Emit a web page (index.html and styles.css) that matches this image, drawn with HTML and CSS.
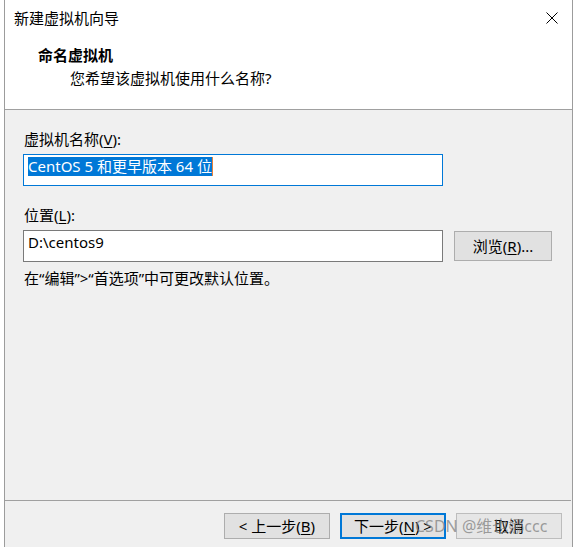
FILE: index.html
```html
<!DOCTYPE html>
<html lang="zh-CN">
<head>
<meta charset="utf-8">
<title>新建虚拟机向导</title>
<link rel="stylesheet" href="styles.css">
</head>
<body>
<div class="window">
  <div class="header">
    <div class="titlebar">
      <span class="title">新建虚拟机向导</span>
      <svg class="close" width="12" height="12" viewBox="0 0 12 12"><path d="M0.5 0.5 L11.5 11.5 M11.5 0.5 L0.5 11.5" stroke="#000" stroke-width="1" fill="none"/></svg>
    </div>
    <div class="heading">命名虚拟机</div>
    <div class="subtitle">您希望该虚拟机使用什么名称?</div>
  </div>
  <div class="body">
    <div class="label">虚拟机名称(<u>V</u>):</div>
    <div class="field field-focus"><span class="sel">CentOS 5 和更早版本 64 位</span><span class="caret"></span></div>
    <div class="label label2">位置(<u>L</u>):</div>
    <div class="row">
      <div class="field">D:\centos9</div>
      <div class="btn browse">浏览(<u>R</u>)...</div>
    </div>
    <div class="hint">在“编辑”&gt;“首选项”中可更改默认位置。</div>
  </div>
  <div class="footer">
    <div class="btn">&lt; 上一步(<u>B</u>)</div>
    <div class="btn btn-default">下一步(<u>N</u>) &gt;</div>
    <div class="btn btn-cancel">取消</div>
    <div class="watermark">CSDN @维也娜ccc</div>
  </div>
</div>
</body>
</html>
```
FILE: styles.css
```css
html, body {
  margin: 0;
  padding: 0;
  background: #ffffff;
}
body {
  font-family: "Noto Sans", "Noto Sans CJK SC", sans-serif;
  font-size: 15px;
  color: #000;
}
u {
  text-decoration: underline;
  text-underline-offset: 2px;
}
.window {
  margin-left: 4px;
  width: 569px;
  height: 547px;
  box-sizing: border-box;
  border-left: 1px solid #9c9c9c;
  border-right: 1px solid #9c9c9c;
  display: flex;
  flex-direction: column;
  background: #f0f0f0;
}
.header {
  height: 109px;
  background: #ffffff;
  border-bottom: 1px solid #a0a0a0;
  flex: none;
}
.titlebar {
  height: 36px;
  display: flex;
  align-items: center;
  justify-content: space-between;
  padding: 0 14px 0 9px;
}
.title {
  line-height: 36px;
}
.close {
  display: block;
}
.heading {
  font-weight: bold;
  line-height: 22px;
  margin-top: 8px;
  padding-left: 33px;
}
.subtitle {
  line-height: 22px;
  margin-top: 1px;
  padding-left: 65px;
}
.body {
  flex: 1;
  padding: 19px 0 0 18px;
}
.label {
  line-height: 20px;
  padding-left: 1px;
  margin-bottom: 5px;
}
.label2 {
  margin-top: 19px;
}
.field {
  width: 420px;
  height: 32px;
  box-sizing: border-box;
  border: 1px solid #7a7a7a;
  background: #fff;
  padding: 2px 0 0 4px;
  line-height: 19px;
  white-space: nowrap;
}
.field-focus {
  border-color: #0078d7;
}
.sel {
  background: #0078d7;
  color: #fff;
  display: inline-block;
  line-height: 19px;
}
.caret {
  display: inline-block;
  width: 1px;
  height: 19px;
  background: #e8823a;
  vertical-align: top;
}
.row {
  display: flex;
  align-items: center;
  gap: 11px;
}
.btn {
  box-sizing: border-box;
  width: 106px;
  height: 26px;
  border: 1px solid #adadad;
  background: #e1e1e1;
  display: flex;
  align-items: center;
  justify-content: center;
  line-height: 20px;
}
.browse {
  width: 98px;
  height: 30px;
}
.hint {
  margin-top: 6px;
  line-height: 20px;
  padding-left: 1px;
}
.footer {
  flex: none;
  height: 47px;
  box-sizing: border-box;
  border-top: 1px solid #a0a0a0;
  margin-right: 1px;
  padding: 12px 9px 0 0;
  display: flex;
  justify-content: flex-end;
  gap: 10px;
  position: relative;
}
.btn-default {
  border: 2px solid #0078d7;
}
.btn-cancel {
  background: #e6e6e6;
  border-color: #bdbdbd;
}
.watermark {
  position: absolute;
  left: 410px;
  top: 14px;
  font-size: 16px;
  line-height: 22px;
  color: rgba(120, 120, 120, 0.7);
  white-space: nowrap;
  pointer-events: none;
}
```
